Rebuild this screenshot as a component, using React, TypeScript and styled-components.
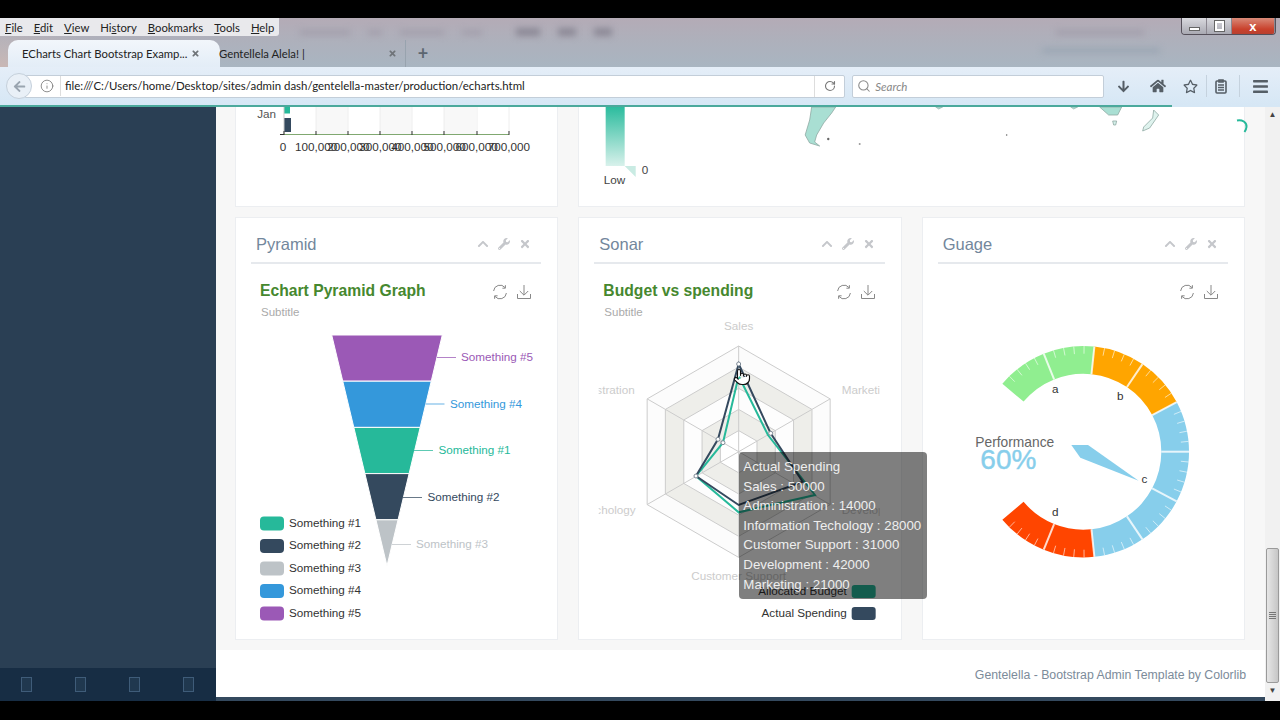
import styled, { createGlobalStyle } from 'styled-components'
import { FaArrowDown, FaArrowLeft, FaBars, FaChevronUp, FaHome, FaRegStar, FaTimes, FaWrench } from 'react-icons/fa'
import { Info, Pointer, RotateCw, Search } from 'lucide-react'

const GlobalStyle = createGlobalStyle`
  html, body {
    margin: 0;
    padding: 0;
    background: #000;
  }
  * {
    box-sizing: border-box;
  }
`

const Screen = styled.div`
  width: 1280px;
  height: 720px;
  overflow: hidden;
  background: #000;
  display: flex;
  flex-direction: column;
  font-family: 'Liberation Sans', Arial, sans-serif;
`

const TopBlack = styled.div`
  height: 18px;
  flex: none;
`

/* ---------- browser chrome ---------- */

const Chrome = styled.div`
  flex: none;
  height: 87px;
  display: flex;
  flex-direction: column;
  font-family: Lato, sans-serif;
  background:
    radial-gradient(ellipse 120px 40px at 0 48px, #c9b7b5, transparent),
    linear-gradient(180deg, #b4abb6 0%, #aeb0bb 25%, #a9b5c1 55%, #a9b5c1 100%);
`

const MenuRow = styled.div`
  height: 22px;
  display: flex;
  align-items: flex-start;
`

const MenuBar = styled.div`
  width: 279px;
  height: 18px;
  flex: none;
  background: #e9e9ec;
  border-radius: 0 0 3px 0;
  display: flex;
  align-items: center;
  gap: 11px;
  padding-left: 5px;
  font-size: 11.3px;
  color: #222;
  u {
    text-decoration: underline;
    text-underline-offset: 1px;
  }
`

const BlurRow = styled.div`
  flex: 1;
  display: flex;
  align-items: center;
  gap: 18px;
  margin: 10px 0 0 21px;
`

const BlurItem = styled.span<{ $w: number; $dark?: boolean; $push?: number }>`
  width: ${p => p.$w}px;
  height: ${p => (p.$dark ? 8 : 5)}px;
  margin-left: ${p => p.$push || 0}px;
  background: ${p => (p.$dark ? '#8c8996' : '#a29eab')};
  filter: blur(3px);
`

const WindowButtons = styled.div`
  flex: none;
  margin-right: 4px;
  width: 95px;
  height: 17px;
  display: flex;
  border: 1px solid #55505a;
  border-top: none;
  border-radius: 0 0 4px 4px;
  overflow: hidden;
`

const WinBtn = styled.div<{ $w: number; $close?: boolean }>`
  width: ${p => p.$w}px;
  display: flex;
  align-items: center;
  justify-content: center;
  border-right: 1px solid #8b8790;
  background: ${p =>
    p.$close ? 'linear-gradient(180deg, #d98a78, #c9412c 70%, #b8402f)' : 'linear-gradient(180deg, #d9d9de, #a9a9b2)'};
  color: #fff;
  font-family: 'Liberation Sans', sans-serif;
  font-size: 13px;
  font-weight: 700;
`

const MinGlyph = styled.span`
  width: 11px;
  height: 4px;
  margin-top: 5px;
  background: #fff;
  border: 1px solid #666;
`

const RestoreGlyph = styled.span`
  width: 9px;
  height: 10px;
  background: transparent;
  border: 2px solid #fff;
  outline: 1px solid #666;
`

const TabRow = styled.div`
  height: 27px;
  display: flex;
  align-items: flex-end;
  padding-left: 8px;
  font-size: 11.3px;
  color: #222;
`

const ActiveTab = styled.div`
  width: 212px;
  height: 27px;
  background: linear-gradient(180deg, #f2f6fb, #e3edf7);
  border-radius: 10px 10px 0 0;
  display: flex;
  align-items: center;
  padding: 0 20px 0 14px;
  justify-content: space-between;
  white-space: nowrap;
`

const Tab = styled.div`
  width: 187px;
  height: 27px;
  display: flex;
  align-items: center;
  justify-content: space-between;
  padding-right: 8px;
  border-right: 1px solid #98a3ae;
  margin-left: -1px;
`

const TabClose = styled.span`
  display: flex;
  color: #6f7479;
`

const NewTab = styled.div`
  width: 34px;
  text-align: center;
  font-size: 18px;
  font-weight: 700;
  line-height: 27px;
  color: #5c6670;
`

const TabBlur = styled.span`
  width: 118px;
  height: 5px;
  margin: 0 120px 14px auto;
  background: #9aa6b3;
  filter: blur(3px);
`

const Toolbar = styled.div`
  height: 38px;
  background: linear-gradient(180deg, #e5eef8, #d6e7f5);
  display: flex;
  align-items: center;
  padding: 0 0 0 6px;
  position: relative;
`

const BackButton = styled.div`
  width: 26px;
  height: 26px;
  flex: none;
  border-radius: 50%;
  background: #e9f0f7;
  border: 1px solid #c5d0db;
  color: #9aa5b0;
  display: flex;
  align-items: center;
  justify-content: center;
  z-index: 1;
`

const UrlBar = styled.div`
  width: 821px;
  height: 23px;
  margin-left: -7px;
  background: #fff;
  border: 1px solid #c3ced9;
  border-radius: 0 2px 2px 0;
  display: flex;
  align-items: center;
  padding-left: 14px;
  color: #777;
`

const UrlText = styled.span`
  flex: 1;
  margin-left: 6px;
  padding-left: 4px;
  border-left: 1px solid #ddd;
  font-size: 11.45px;
  line-height: 20px;
  color: #222;
  white-space: nowrap;
`

const Reload = styled.span`
  width: 30px;
  height: 21px;
  border-left: 1px solid #ddd;
  display: flex;
  align-items: center;
  justify-content: center;
  color: #777;
`

const SearchBar = styled.div`
  width: 252px;
  height: 23px;
  margin-left: 7px;
  background: #fff;
  border: 1px solid #c3ced9;
  border-radius: 2px;
  display: flex;
  align-items: center;
  gap: 4px;
  padding-left: 4px;
  font-size: 11.5px;
  font-style: italic;
  color: #888;
`

const ToolIcons = styled.div`
  flex: 1;
  display: flex;
  align-items: center;
  color: #555e66;
`

const ToolIcon = styled.span<{ $w: number }>`
  width: ${p => p.$w}px;
  height: 22px;
  flex: none;
  display: flex;
  align-items: center;
  justify-content: center;
`

const ToolSep = styled.span<{ $left?: number }>`
  width: 1px;
  height: 22px;
  margin-left: ${p => p.$left || 0}px;
  background: #c5d2de;
  flex: none;
`

const Progress = styled.div`
  height: 2px;
  flex: none;
  background: #d6e7f5;
`

const ProgressFill = styled.div`
  width: 1172px;
  height: 2px;
  background: #4ba99c;
`

/* ---------- page ---------- */

const Body = styled.div`
  flex: none;
  height: 594px;
  display: flex;
`

const Sidebar = styled.aside`
  width: 216px;
  flex: none;
  background: #2a3f54;
  display: flex;
  flex-direction: column;
  justify-content: flex-end;
`

const SidebarFooter = styled.div`
  height: 33px;
  background: #172d44;
  display: grid;
  grid-template-columns: repeat(4, 53.75px);
  align-items: center;
  justify-items: center;
`

const Tofu = styled.span`
  width: 11px;
  height: 15px;
  border: 1px solid #3f5c79;
  background: #20384f;
`

const Main = styled.main`
  flex: 1;
  min-width: 0;
  position: relative;
  background: #f7f7f7;
  display: flex;
  flex-direction: column;
`

const Panels = styled.div`
  display: grid;
  grid-template-columns: repeat(3, minmax(0, 1fr));
  grid-template-rows: 100px 423px;
  gap: 10px 20px;
  padding: 0 20px 0 19px;
`

const Card = styled.section<{ $wide?: boolean }>`
  position: relative;
  min-width: 0;
  background: #fff;
  border: 1px solid #eceef1;
  grid-column: ${p => (p.$wide ? 'span 2' : 'auto')};
  display: flex;
  flex-direction: column;
`

const TopCard = styled(Card)`
  border-top: none;
  overflow: hidden;
`

const CardHead = styled.header`
  height: 46px;
  margin: 0 16px 0 15px;
  padding: 8px 10px 0 5px;
  border-bottom: 2px solid #e6e9ed;
  display: flex;
  align-items: center;
  justify-content: space-between;
`

const CardTitle = styled.h2`
  margin: 0;
  font-size: 16.5px;
  font-weight: 400;
  color: #73879c;
`

const Actions = styled.div`
  display: flex;
  align-items: center;
  gap: 9px;
  color: #c5c7cb;
`

const ChartHead = styled.div`
  height: 56px;
  padding: 17px 25px 0 24px;
  display: flex;
  justify-content: space-between;
`

const ChartTitle = styled.h3`
  margin: 0;
  font-size: 15.7px;
  line-height: 20px;
  font-weight: 700;
  color: #46882f;
`

const ChartSub = styled.p`
  margin: 3px 0 0 1px;
  font-size: 11.5px;
  line-height: 16px;
  color: #aaa;
`

const Toolbox = styled.div`
  margin-left: auto;
  display: flex;
  gap: 8px;
  height: 24px;
  padding-top: 3px;
`

const ChartSvg = styled.svg`
  display: block;
  flex: none;
  font-family: 'Liberation Sans', Arial, sans-serif;
  font-size: 11.7px;
`

const Tooltip = styled.div`
  position: absolute;
  left: 160px;
  top: 234px;
  width: 188px;
  height: 147px;
  padding: 5px 4px;
  border-radius: 4px;
  background: rgba(0, 0, 0, 0.5);
  color: #eee;
  font-size: 13.3px;
  line-height: 19.6px;
  white-space: nowrap;
  z-index: 2;
`

const Cursor = styled.span`
  position: absolute;
  left: 154px;
  top: 150px;
  display: flex;
  color: #111;
  z-index: 3;
`

const Spinner = styled.svg`
  position: absolute;
  left: 1020px;
  top: 11px;
`

const Footer = styled.footer`
  margin-top: 10px;
  flex: 1;
  background: #fff;
  border-bottom: 4px solid #34495e;
  display: flex;
  align-items: center;
  justify-content: flex-end;
  padding: 2px 19px 0 0;
  font-size: 12.3px;
  color: #7c8b9a;
`

const Scrollbar = styled.div`
  width: 15px;
  flex: none;
  background: #f1f1f1;
  display: flex;
  flex-direction: column;
  align-items: center;
  color: #444;
  font-size: 8px;
`

const ScrollArrow = styled.div`
  height: 16px;
  flex: none;
  line-height: 16px;
`

const ScrollGap = styled.div`
  height: 425px;
  flex: none;
`

const Thumb = styled.div`
  width: 13px;
  height: 135px;
  flex: none;
  border: 1px solid #9a9a9a;
  border-radius: 2px;
  background: linear-gradient(90deg, #e6e6e6, #c6c6c6);
  display: flex;
  flex-direction: column;
  align-items: center;
  justify-content: center;
  gap: 1px;
  span {
    width: 7px;
    height: 1px;
    background: #777;
  }
`

/* ---------- chart data ---------- */

const pyramid = [
  { name: 'Something #5', color: '#9b59b6', lineY: 357.5, edge: 437, text: 461 },
  { name: 'Something #4', color: '#3498db', lineY: 404, edge: 425.5, text: 450 },
  { name: 'Something #1', color: '#26b99a', lineY: 450.5, edge: 414, text: 438.5 },
  { name: 'Something #2', color: '#34495e', lineY: 497.5, edge: 403, text: 427.5 },
  { name: 'Something #3', color: '#bdc3c7', lineY: 544.5, edge: 392, text: 416 },
]

const pyramidLegend = [
  { name: 'Something #1', color: '#26b99a' },
  { name: 'Something #2', color: '#34495e' },
  { name: 'Something #3', color: '#bdc3c7' },
  { name: 'Something #4', color: '#3498db' },
  { name: 'Something #5', color: '#9b59b6' },
]

const tooltipLines = [
  'Actual Spending',
  'Sales : 50000',
  'Administration : 14000',
  'Information Techology : 28000',
  'Customer Support : 31000',
  'Development : 42000',
  'Marketing : 21000',
]

const gaugeBands = [
  { from: 0, to: 0.2, color: '#90ee90' },
  { from: 0.2, to: 0.4, color: '#ffa500' },
  { from: 0.4, to: 0.8, color: '#87ceeb' },
  { from: 0.8, to: 1, color: '#ff4500' },
]

const polar = (cx: number, cy: number, r: number, deg: number) => {
  const a = (deg * Math.PI) / 180
  return [cx + r * Math.cos(a), cy - r * Math.sin(a)]
}

const hexagon = (r: number) =>
  [90, 150, 210, 270, 330, 30]
    .map(d => polar(739, 451.7, r, d).map(n => n.toFixed(1)).join(','))
    .join(' ')

const GX = 1083
const GY = 451.7
const fracToDeg = (f: number) => 140 - f * 280

const bandPath = (from: number, to: number) => {
  const [x1, y1] = polar(GX, GY, 105.7, fracToDeg(from))
  const [x2, y2] = polar(GX, GY, 105.7, fracToDeg(to))
  const [x3, y3] = polar(GX, GY, 78, fracToDeg(to))
  const [x4, y4] = polar(GX, GY, 78, fracToDeg(from))
  const large = (to - from) * 280 > 180 ? 1 : 0
  return `M${x1} ${y1}A105.7 105.7 0 ${large} 1 ${x2} ${y2}L${x3} ${y3}A78 78 0 ${large} 0 ${x4} ${y4}Z`
}

const RefreshIcon = () => (
  <svg width="16" height="16" viewBox="0 0 16 16" fill="none" stroke="#888" strokeWidth="1">
    <path d="M1.6 7A6.4 6.4 0 0 1 13 3.6" />
    <path d="M14.4 9A6.4 6.4 0 0 1 3 12.4" />
    <path d="M13.4 1.2V4.2H10.4" />
    <path d="M2.6 14.8V11.8H5.6" />
  </svg>
)

const SaveIcon = () => (
  <svg width="16" height="16" viewBox="0 0 16 16" fill="none" stroke="#888" strokeWidth="1">
    <path d="M8 1V11M3.8 7L8 11.2L12.2 7" />
    <path d="M1.5 10V14.5H14.5V10" />
  </svg>
)

const PanelHead = ({ title }: { title: string }) => (
  <CardHead>
    <CardTitle>{title}</CardTitle>
    <Actions>
      <FaChevronUp size={12} />
      <FaWrench size={12} />
      <FaTimes size={12} />
    </Actions>
  </CardHead>
)

const App = () => {
  return (
    <Screen>
      <GlobalStyle />
      <TopBlack />
      <Chrome>
        <MenuRow>
          <MenuBar>
            <span><u>F</u>ile</span>
            <span><u>E</u>dit</span>
            <span><u>V</u>iew</span>
            <span>Hi<u>s</u>tory</span>
            <span><u>B</u>ookmarks</span>
            <span><u>T</u>ools</span>
            <span><u>H</u>elp</span>
          </MenuBar>
          <BlurRow>
            <BlurItem $w={50} />
            <BlurItem $w={14} />
            <BlurItem $w={44} />
            <BlurItem $w={20} />
            <BlurItem $w={24} $dark $push={16} />
            <BlurItem $w={18} $dark />
            <BlurItem $w={18} $dark />
            <BlurItem $w={88} $push={426} />
          </BlurRow>
          <WindowButtons>
            <WinBtn $w={26}><MinGlyph /></WinBtn>
            <WinBtn $w={25}><RestoreGlyph /></WinBtn>
            <WinBtn $w={44} $close>x</WinBtn>
          </WindowButtons>
        </MenuRow>
        <TabRow>
          <ActiveTab>
            <span>ECharts Chart Bootstrap Examp...</span>
            <TabClose><FaTimes size={9} /></TabClose>
          </ActiveTab>
          <Tab>
            <span>Gentellela Alela! |</span>
            <TabClose><FaTimes size={9} /></TabClose>
          </Tab>
          <NewTab>+</NewTab>
          <TabBlur />
        </TabRow>
        <Toolbar>
          <BackButton><FaArrowLeft size={13} /></BackButton>
          <UrlBar>
            <Info size={14} strokeWidth={1.4} />
            <UrlText>file:///C:/Users/home/Desktop/sites/admin dash/gentelella-master/production/echarts.html</UrlText>
            <Reload><RotateCw size={12} strokeWidth={2.2} /></Reload>
          </UrlBar>
          <SearchBar>
            <Search size={14} strokeWidth={1.8} />
            Search
          </SearchBar>
          <ToolIcons>
            <ToolIcon $w={38}><FaArrowDown size={13} /></ToolIcon>
            <ToolIcon $w={32}><FaHome size={16} /></ToolIcon>
            <ToolIcon $w={32}><FaRegStar size={15} /></ToolIcon>
            <ToolSep />
            <ToolIcon $w={28}>
              <svg width="12" height="16" viewBox="0 0 12 16" fill="none" stroke="currentColor" strokeWidth="1.6">
                <rect x="1" y="3" width="10" height="12" rx="1" />
                <path d="M4 2H8V4H4ZM3 7H9M3 9.5H9M3 12H9" />
              </svg>
            </ToolIcon>
            <ToolSep $left={4} />
            <ToolIcon $w={40}><FaBars size={17} /></ToolIcon>
          </ToolIcons>
        </Toolbar>
      </Chrome>
      <Progress><ProgressFill /></Progress>
      <Body>
        <Sidebar>
          <SidebarFooter>
            <Tofu />
            <Tofu />
            <Tofu />
            <Tofu />
          </SidebarFooter>
        </Sidebar>
        <Main>
          <Panels>
            <TopCard>
              <ChartSvg width="321.33" height="99" viewBox="236 107 321.33 99">
                {[316, 380, 444].map(x => (
                  <rect key={x} x={x} y="107" width="32" height="27" fill="#f8f8f8" />
                ))}
                {[316, 348, 380, 412, 444, 477, 509].map(x => (
                  <line key={x} x1={x} x2={x} y1="107" y2="134" stroke="#eee" />
                ))}
                <rect x="284" y="107" width="6" height="6.5" fill="#26b99a" />
                <rect x="284" y="118" width="7" height="14" fill="#34495e" />
                <line x1="284" x2="284" y1="107" y2="135" stroke="#ccc" />
                <line x1="280" x2="284" y1="134.5" y2="134.5" stroke="#333" />
                <line x1="284" x2="509" y1="134.5" y2="134.5" stroke="#7fa86f" />
                {[284, 316, 348, 380, 412, 444, 477, 509].map(x => (
                  <line key={x} x1={x} x2={x} y1="131" y2="135" stroke="#333" />
                ))}
                <text x="276" y="118" textAnchor="end" fill="#555">Jan</text>
                <text x="283" y="151" textAnchor="middle" fill="#333">0</text>
                {['100,000', '200,000', '300,000', '400,000', '500,000', '600,000', '700,000'].map((t, i) => (
                  <text key={t} x={316.2 + i * 32.1} y="151" textAnchor="middle" fill="#333">{t}</text>
                ))}
              </ChartSvg>
            </TopCard>
            <TopCard $wide>
              <ChartSvg width="664.67" height="99" viewBox="579.33 107 664.67 99">
                <defs>
                  <linearGradient id="legendFill" x1="0" y1="0" x2="0" y2="1">
                    <stop offset="0" stopColor="#2cbc9e" />
                    <stop offset="1" stopColor="#d8f1eb" />
                  </linearGradient>
                </defs>
                <rect x="606" y="107" width="19" height="59" fill="url(#legendFill)" />
                <polygon points="625,166 636,166 636,177" fill="#c9ebe3" />
                <text x="642" y="174" fill="#444">0</text>
                <text x="604" y="184" fill="#444">Low</text>
                <polygon
                  points="812,107 836,107 832,113 824,123 817,135 815,142 820,146 810,143 805.5,135 810,120"
                  fill="#a9dfd3"
                  stroke="#8fa9a3"
                  strokeWidth="0.8"
                />
                <circle cx="828.6" cy="139" r="1.2" fill="#666" />
                <circle cx="860" cy="144" r="1" fill="#999" />
                <circle cx="1007" cy="135" r="0.8" fill="#666" />
                <polygon points="936,107 943,107 939,109" fill="#a9dfd3" stroke="#8fa9a3" strokeWidth="0.6" />
                <polygon points="1071,107 1078,107 1074,109" fill="#a9dfd3" stroke="#8fa9a3" strokeWidth="0.6" />
                <polygon points="1100,107 1122,107 1118,115 1109,115" fill="#a9dfd3" stroke="#8fa9a3" strokeWidth="0.8" />
                <polygon points="1113,121 1117,121 1116,125 1114,125" fill="#d4efe9" stroke="#8fa9a3" strokeWidth="0.8" />
                <polygon points="1154,110 1159,115 1150,128 1143,131 1144,127 1153,118" fill="#dff3ee" stroke="#8fa9a3" strokeWidth="0.8" />
              </ChartSvg>
            </TopCard>

            <Card>
              <PanelHead title="Pyramid" />
              <ChartHead>
                <div>
                  <ChartTitle>Echart Pyramid Graph</ChartTitle>
                  <ChartSub>Subtitle</ChartSub>
                </div>
                <Toolbox><RefreshIcon /><SaveIcon /></Toolbox>
              </ChartHead>
              <ChartSvg width="321.33" height="319" viewBox="236 320 321.33 319">
                {pyramid.map((s, i) => {
                  const y1 = 335 + i * 46.2
                  const y2 = y1 + 46.2
                  const half = (y: number) => ((566 - y) / 231) * 55.3
                  return (
                    <polygon
                      key={s.name}
                      points={`${387 - half(y1)},${y1} ${387 + half(y1)},${y1} ${387 + half(y2)},${y2} ${387 - half(y2)},${y2}`}
                      fill={s.color}
                      stroke="#fff"
                      strokeWidth="1"
                    />
                  )
                })}
                {pyramid.map(s => (
                  <g key={s.name}>
                    <line x1={s.edge} x2={s.edge + 19} y1={s.lineY} y2={s.lineY} stroke={s.color} opacity="0.75" />
                    <text x={s.text} y={s.lineY + 4} fill={s.color}>{s.name}</text>
                  </g>
                ))}
                {pyramidLegend.map((l, i) => (
                  <g key={l.name}>
                    <rect x="260" y={516.5 + i * 22.5} width="24" height="14" rx="4" fill={l.color} />
                    <text x="289" y={527 + i * 22.5} fill="#333">{l.name}</text>
                  </g>
                ))}
              </ChartSvg>
            </Card>

            <Card>
              <PanelHead title="Sonar" />
              <ChartHead>
                <div>
                  <ChartTitle>Budget vs spending</ChartTitle>
                  <ChartSub>Subtitle</ChartSub>
                </div>
                <Toolbox><RefreshIcon /><SaveIcon /></Toolbox>
              </ChartHead>
              <ChartSvg width="321.33" height="319" viewBox="579.33 320 321.33 319">
                <defs>
                  <clipPath id="radarClip">
                    <rect x="599" y="320" width="281" height="320" />
                  </clipPath>
                </defs>
                <polygon points={hexagon(105.7)} fill="#fcfcfc" stroke="#ccc" />
                <polygon points={hexagon(84.6)} fill="#eeeeea" stroke="#ccc" />
                <polygon points={hexagon(63.4)} fill="#fdfdfd" stroke="#ccc" />
                <polygon points={hexagon(42.3)} fill="#eeeeea" stroke="#ccc" />
                <polygon points={hexagon(21.1)} fill="#fff" stroke="#ccc" />
                {[90, 150, 210].map(d => {
                  const [x1, y1] = polar(739, 451.7, 105.7, d)
                  const [x2, y2] = polar(739, 451.7, 105.7, d + 180)
                  return <line key={d} x1={x1} y1={y1} x2={x2} y2={y2} stroke="#ccc" />
                })}
                <polygon
                  points="739,376 723.3,442.7 696.3,476 739,512.3 815.3,495 768.3,435"
                  fill="none"
                  stroke="#26b99a"
                  strokeWidth="2"
                />
                <polygon
                  points="739,364 718.3,439.3 696.3,476 739,505 803,481.7 771,433.3"
                  fill="none"
                  stroke="#34495e"
                  strokeWidth="2"
                />
                {[
                  [739, 364],
                  [718.3, 439.3],
                  [696.3, 476],
                  [771, 433.3],
                  [723.3, 442.7],
                ].map(([x, y]) => (
                  <circle key={`${x}-${y}`} cx={x} cy={y} r="2" fill="#fff" stroke="#7d8a96" />
                ))}
                <g clipPath="url(#radarClip)" fill="#ccc">
                  <text x="739" y="330" textAnchor="middle">Sales</text>
                  <text x="635" y="394" textAnchor="end">Administration</text>
                  <text x="842" y="394">Marketing</text>
                  <text x="636" y="514" textAnchor="end">Information Techology</text>
                  <text x="842" y="514">Development</text>
                  <text x="739" y="580" textAnchor="middle">Customer Support</text>
                </g>
                <text x="847" y="595" textAnchor="end" fill="#333">Allocated Budget</text>
                <rect x="852" y="585" width="24" height="13" rx="3" fill="#26b99a" />
                <text x="847" y="617" textAnchor="end" fill="#333">Actual Spending</text>
                <rect x="852" y="607" width="24" height="13" rx="3" fill="#34495e" />
              </ChartSvg>
              <Cursor><Pointer size={18} fill="#fff" strokeWidth={1.5} /></Cursor>
              <Tooltip>
                {tooltipLines.map(line => (
                  <div key={line}>{line}</div>
                ))}
              </Tooltip>
            </Card>

            <Card>
              <PanelHead title="Guage" />
              <ChartHead>
                <Toolbox><RefreshIcon /><SaveIcon /></Toolbox>
              </ChartHead>
              <ChartSvg width="321.33" height="319" viewBox="922.67 320 321.33 319">
                {gaugeBands.map(b => (
                  <path key={b.color} d={bandPath(b.from, b.to)} fill={b.color} />
                ))}
                {Array.from({ length: 51 }, (_, i) => {
                  const deg = fracToDeg(i / 50)
                  const major = i % 5 === 0
                  if (i === 0 || i === 50) return null
                  const [x1, y1] = polar(GX, GY, major ? 78 : 98, deg)
                  const [x2, y2] = polar(GX, GY, 105.7, deg)
                  return (
                    <line
                      key={i}
                      x1={x1}
                      y1={y1}
                      x2={x2}
                      y2={y2}
                      stroke="#fff"
                      strokeOpacity={major ? 0.8 : 0.6}
                      strokeWidth={major ? 2 : 1}
                    />
                  )
                })}
                <polygon points="1071,445 1087.7,445 1138.3,480.7 1080,457.7" fill="#87ceeb" />
                <g fill="#333" textAnchor="middle">
                  <text x="1055" y="393">a</text>
                  <text x="1120" y="400.5">b</text>
                  <text x="1144" y="483">c</text>
                  <text x="1055" y="516.5">d</text>
                </g>
                <text x="975" y="447" fontSize="13.8" fill="#666">Performance</text>
                <text x="980" y="469" fontSize="28" fill="#87ceeb" stroke="#87ceeb" strokeWidth="0.4">60%</text>
              </ChartSvg>
            </Card>
          </Panels>
          <Footer>Gentelella - Bootstrap Admin Template by Colorlib</Footer>
          <Spinner width="18" height="18" viewBox="0 0 18 18" fill="none" stroke="#26b99a" strokeWidth="2">
            <path d="M1 2.5C6 1.5 11 4 10.5 9C10.3 11 9.5 12.5 8.5 14" />
          </Spinner>
        </Main>
        <Scrollbar>
          <ScrollArrow>▲</ScrollArrow>
          <ScrollGap />
          <Thumb><span /><span /><span /><span /></Thumb>
          <ScrollArrow>▼</ScrollArrow>
        </Scrollbar>
      </Body>
    </Screen>
  )
}

export default App
